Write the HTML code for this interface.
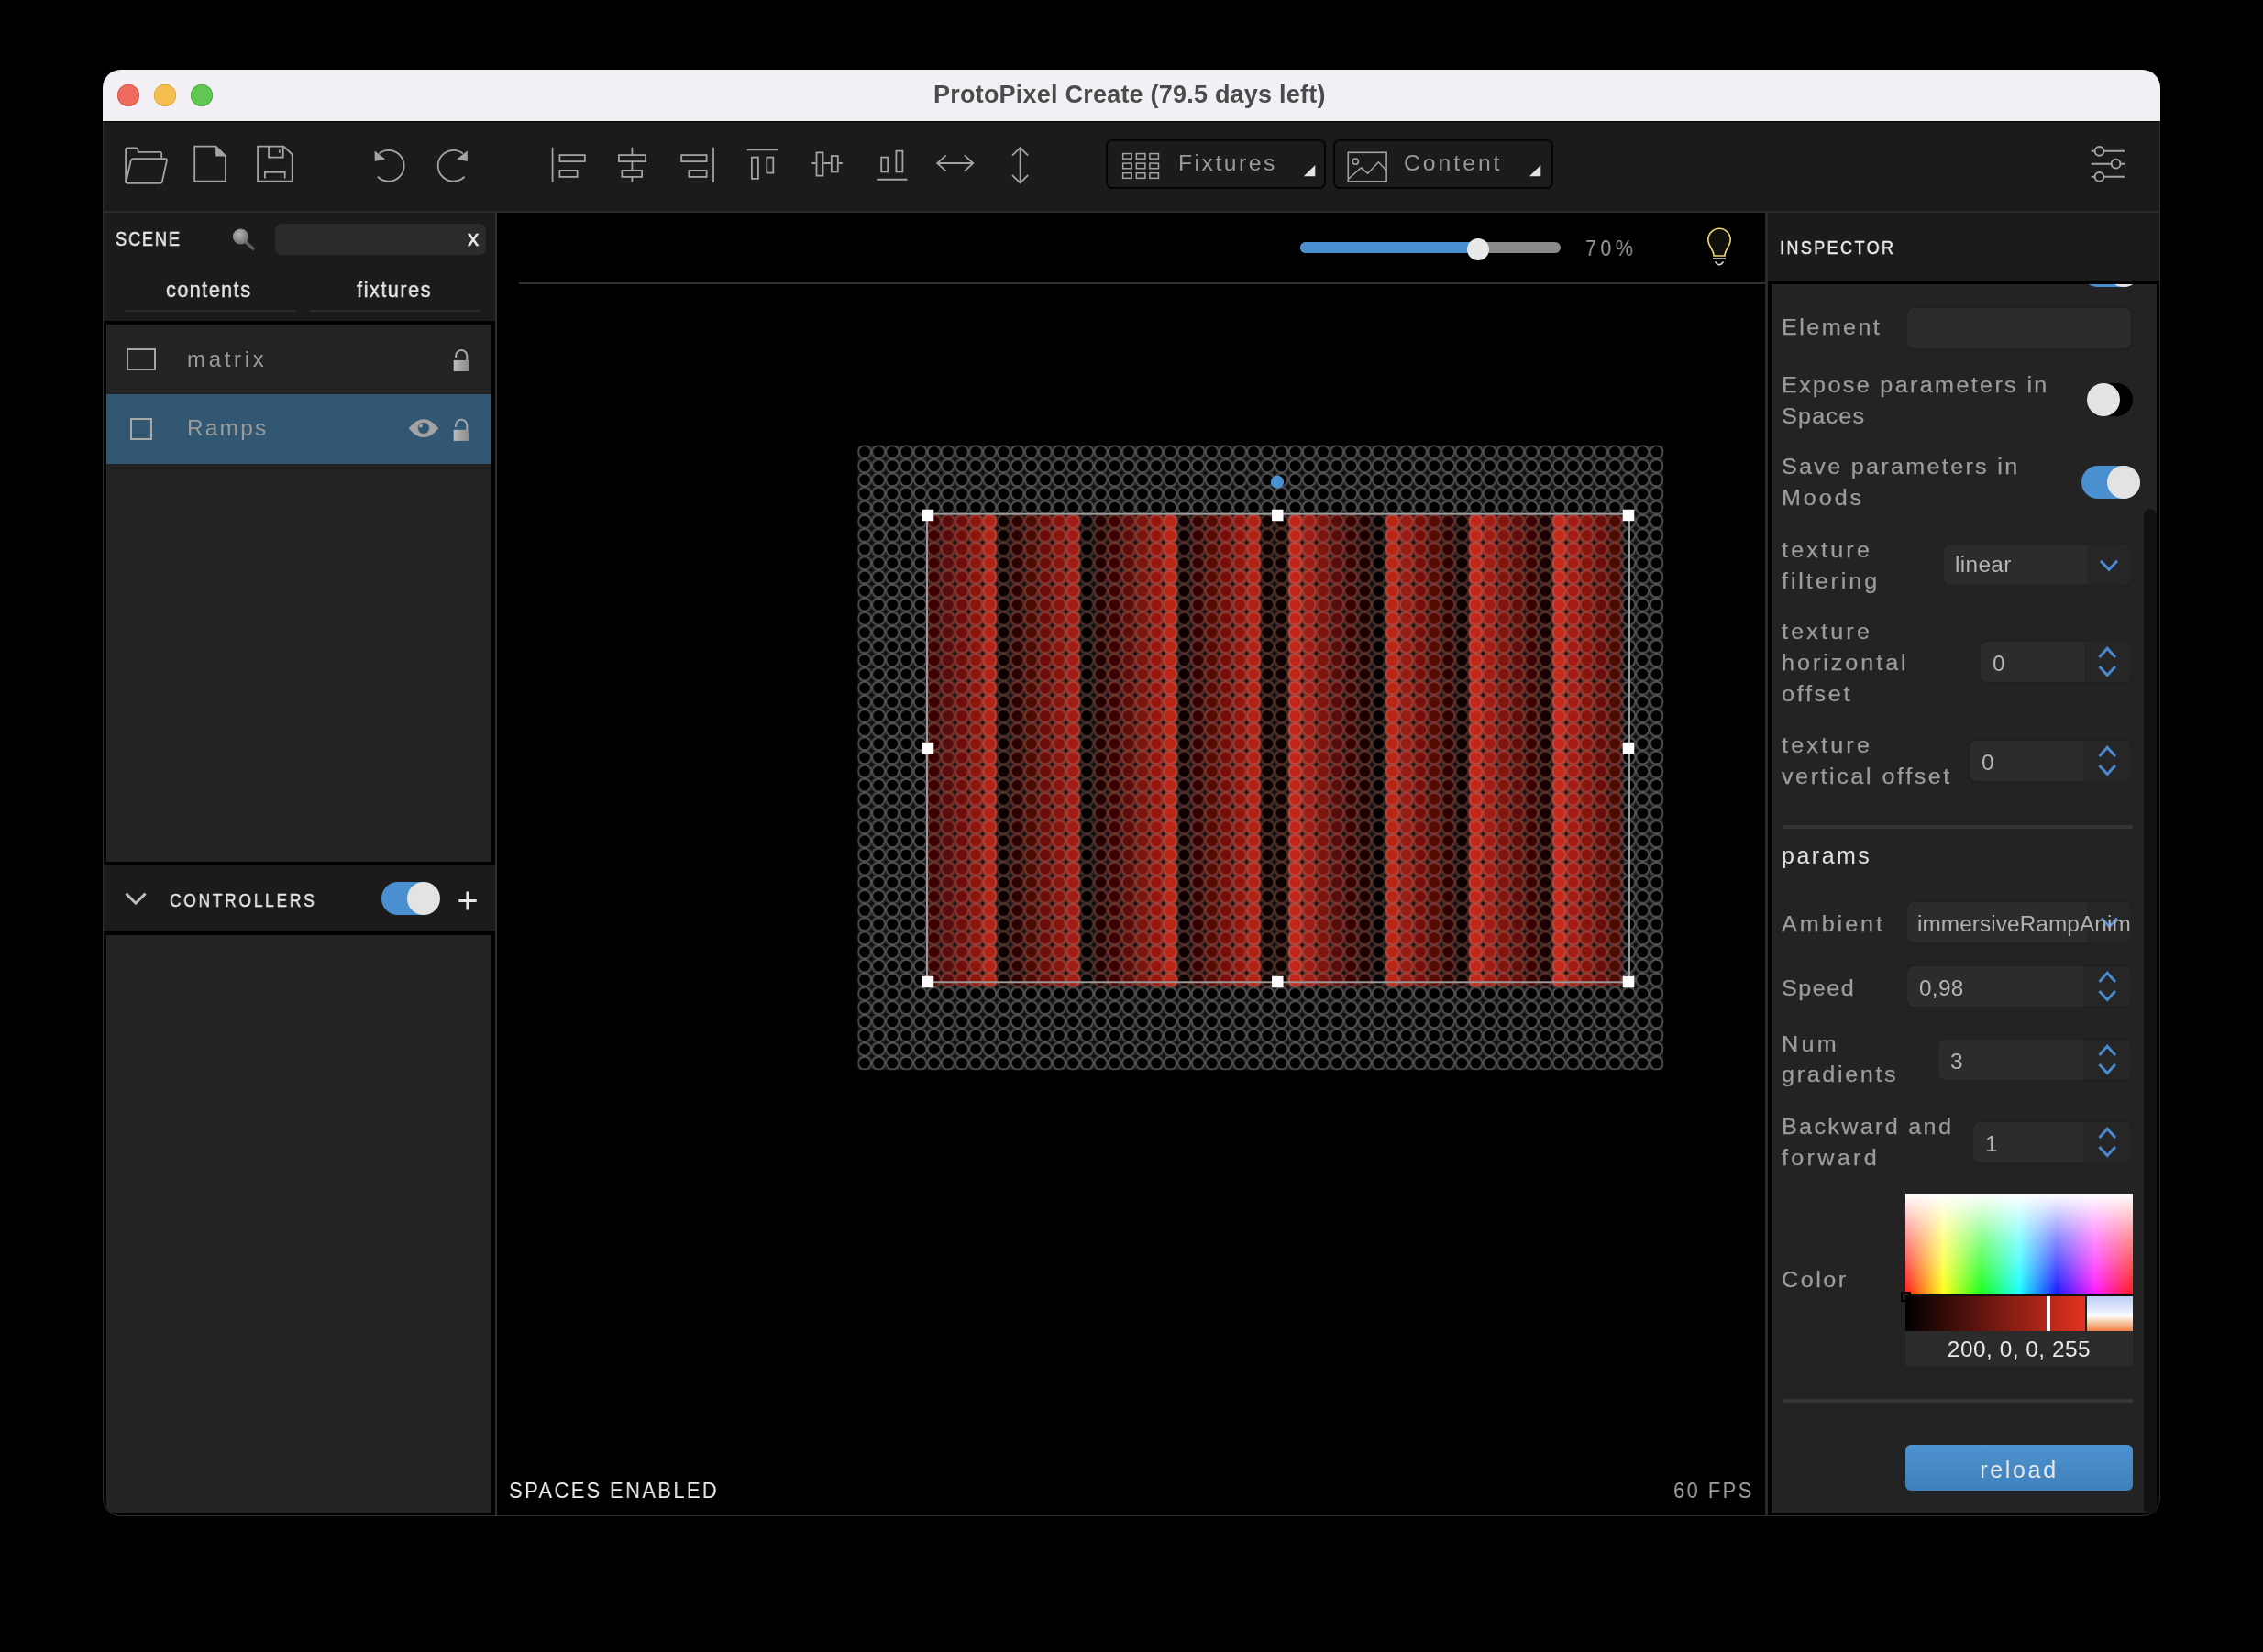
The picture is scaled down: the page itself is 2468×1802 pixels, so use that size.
<!DOCTYPE html><html><head><meta charset="utf-8"><style>html,body{margin:0;padding:0;background:#000;width:2468px;height:1802px;overflow:hidden}.r{position:absolute}.t{position:absolute;white-space:pre;font-family:"Liberation Sans",sans-serif;-webkit-font-smoothing:antialiased;will-change:transform}</style></head><body>
<div class="r" style="left:112px;top:76px;width:2244px;height:1578px;background:#000;border-radius:20px;box-shadow:inset 0 0 0 1px #2e2e2e"></div>
<div class="r" style="left:112px;top:76px;width:2244px;height:56px;background:#f2f0f5;border-radius:20px 20px 0 0"></div>
<div class="r" style="left:128.2px;top:92.2px;width:23.8px;height:23.8px;border-radius:50%;background:#ee6a5f;box-shadow:inset 0 0 0 0.8px #d5544a"></div>
<div class="r" style="left:168.2px;top:92.2px;width:23.8px;height:23.8px;border-radius:50%;background:#f5be4f;box-shadow:inset 0 0 0 0.8px #d9a03a"></div>
<div class="r" style="left:208.1px;top:92.2px;width:23.8px;height:23.8px;border-radius:50%;background:#62c655;box-shadow:inset 0 0 0 0.8px #4da43f"></div>
<div class="t" style="left:1017.5px;top:89.6px;font-size:27px;line-height:27px;color:#4b4b4b;font-weight:700;letter-spacing:0.22px;">ProtoPixel Create (79.5 days left)</div>
<div class="r" style="left:113px;top:133px;width:2242px;height:97px;background:#1b1b1b;"></div>
<div class="r" style="left:113px;top:230px;width:2242px;height:2px;background:#2c2c2c;"></div>
<div class="r" style="left:1206px;top:152px;width:240px;height:53.5px;background:#1b1b1b;border:2px solid #050505;border-radius:7px;box-sizing:border-box"></div>
<div class="r" style="left:1454px;top:152px;width:240px;height:53.5px;background:#1b1b1b;border:2px solid #050505;border-radius:7px;box-sizing:border-box"></div>
<div class="t" style="left:1285.0px;top:165.7px;font-size:24.7px;line-height:24.7px;color:#9a9a9a;letter-spacing:2.5px;">Fixtures</div>
<div class="t" style="left:1531.0px;top:165.7px;font-size:24.7px;line-height:24.7px;color:#9a9a9a;letter-spacing:3.0px;">Content</div>
<div class="r" style="left:540px;top:232px;width:2px;height:1422px;background:#2e2e2e;"></div>
<div class="r" style="left:113px;top:232px;width:427px;height:118px;background:#1b1b1b;"></div>
<div class="t" style="left:126.0px;top:250.9px;font-size:21.4px;line-height:21.4px;color:#e8e8e8;letter-spacing:1.95px;transform:scaleX(0.86);transform-origin:0 0;-webkit-text-stroke:0.45px #e8e8e8">SCENE</div>
<div class="r" style="left:300px;top:244px;width:230px;height:34px;background:#2b2b2b;border-radius:7px"></div>
<div class="t" style="left:510.4px;top:247.9px;font-size:24.5px;line-height:24.5px;color:#e8e8e8;-webkit-text-stroke:0.5px #e8e8e8">x</div>
<div class="t" style="left:181.0px;top:304.4px;font-size:24px;line-height:24px;color:#e6e6e6;letter-spacing:1.63px;transform:scaleX(0.9);transform-origin:0 0;-webkit-text-stroke:0.45px #e6e6e6">contents</div>
<div class="t" style="left:389.2px;top:304.4px;font-size:24px;line-height:24px;color:#e6e6e6;letter-spacing:1.72px;transform:scaleX(0.9);transform-origin:0 0;-webkit-text-stroke:0.45px #e6e6e6">fixtures</div>
<div class="r" style="left:136px;top:338px;width:186px;height:2px;background:#2c2c2c;"></div>
<div class="r" style="left:338px;top:338px;width:186px;height:2px;background:#2c2c2c;"></div>
<div class="r" style="left:116px;top:354px;width:420px;height:585.5px;background:#232323;"></div>
<div class="r" style="left:116px;top:430px;width:420px;height:75.69999999999999px;background:#315773;"></div>
<div class="r" style="left:138px;top:380px;width:32px;height:24px;background:transparent;border:2.3px solid #a8a8a8;box-sizing:border-box"></div>
<div class="r" style="left:142px;top:456px;width:24px;height:24px;background:transparent;border:2.3px solid #a8a8a8;box-sizing:border-box"></div>
<div class="t" style="left:204.0px;top:380.2px;font-size:24px;line-height:24px;color:#9a9a9a;letter-spacing:3.7px;">matrix</div>
<div class="t" style="left:203.5px;top:455.4px;font-size:24.5px;line-height:24.5px;color:#9a9a9a;letter-spacing:2.15px;">Ramps</div>
<div class="r" style="left:113px;top:944px;width:427px;height:71.29999999999995px;background:#1b1b1b;"></div>
<div class="t" style="left:185.4px;top:971.5px;font-size:20.1px;line-height:20.1px;color:#e6e6e6;letter-spacing:3.26px;transform:scaleX(0.86);transform-origin:0 0;-webkit-text-stroke:0.45px #e6e6e6">CONTROLLERS</div>
<div class="r" style="left:116px;top:1020px;width:420px;height:630px;background:#232323;border-bottom-left-radius:8px"></div>
<div class="r" style="left:415.8px;top:961.8px;width:61.599999999999966px;height:36.0px;background:#4a8fd0;border-radius:18px"></div>
<div class="r" style="left:444px;top:962px;width:36px;height:36px;border-radius:50%;background:#e3e3e3"></div>
<div class="r" style="left:1418.3px;top:264.1px;width:283.79999999999995px;height:11.699999999999989px;background:#8a8a8a;border-radius:6px"></div>
<div class="r" style="left:1418.3px;top:264.1px;width:195.70000000000005px;height:11.699999999999989px;background:#4a90d0;border-radius:6px 0 0 6px"></div>
<div class="r" style="left:1600px;top:260px;width:24px;height:24px;border-radius:50%;background:#e8e8e8"></div>
<div class="t" style="left:1728.8px;top:260.1px;font-size:23.7px;line-height:23.7px;color:#9a9a9a;letter-spacing:5.13px;transform:scaleX(0.9);transform-origin:0 0;">70%</div>
<div class="r" style="left:566px;top:308px;width:1359px;height:2px;background:#2e2e2e;"></div>
<svg class="r" style="left:0;top:0" width="2468" height="1802" viewBox="0 0 2468 1802"><defs><pattern id="ring" patternUnits="userSpaceOnUse" x="935.4" y="485.5" width="15.15" height="15.15"><circle cx="7.575" cy="7.575" r="6.75" fill="none" stroke="rgba(255,255,255,0.31)" stroke-width="1.6"/></pattern><pattern id="ringr" patternUnits="userSpaceOnUse" x="935.4" y="485.5" width="15.15" height="15.15"><circle cx="7.575" cy="7.575" r="6.75" fill="none" stroke="rgba(255,140,120,0.28)" stroke-width="1.6"/></pattern><pattern id="blk" patternUnits="userSpaceOnUse" x="935.4" y="485.5" width="15.15" height="15.15"><circle cx="7.575" cy="7.575" r="7.1" fill="#000"/></pattern><pattern id="dots" patternUnits="userSpaceOnUse" x="942.975" y="493.075" width="15.15" height="15.15"><circle cx="7.575" cy="7.575" r="1.8" fill="rgba(0,0,0,0.75)"/></pattern><mask id="gapm" maskUnits="userSpaceOnUse" x="935.4" y="485.5" width="878.70" height="681.75"><rect x="935.4" y="485.5" width="878.70" height="681.75" fill="#fff"/><rect x="935.4" y="485.5" width="878.70" height="681.75" fill="url(#blk)"/></mask><filter id="soft" x="0" y="0" width="1" height="1"><feGaussianBlur stdDeviation="0.5"/></filter></defs><g filter="url(#soft)"><rect x="935.4" y="485.5" width="878.70" height="681.75" fill="#000"/><rect x="1011.15" y="561.25" width="15.35" height="515.10" fill="rgb(58,5,3)"/><rect x="1026.30" y="561.25" width="15.35" height="515.10" fill="rgb(85,10,7)"/><rect x="1041.45" y="561.25" width="15.35" height="515.10" fill="rgb(110,15,10)"/><rect x="1056.60" y="561.25" width="15.35" height="515.10" fill="rgb(138,22,15)"/><rect x="1071.75" y="561.25" width="15.35" height="515.10" fill="rgb(176,34,23)"/><rect x="1086.90" y="561.25" width="15.35" height="515.10" fill="rgb(10,0,0)"/><rect x="1102.05" y="561.25" width="15.35" height="515.10" fill="rgb(42,3,2)"/><rect x="1117.20" y="561.25" width="15.35" height="515.10" fill="rgb(74,8,5)"/><rect x="1132.35" y="561.25" width="15.35" height="515.10" fill="rgb(106,14,10)"/><rect x="1147.50" y="561.25" width="15.35" height="515.10" fill="rgb(133,21,14)"/><rect x="1162.65" y="561.25" width="15.35" height="515.10" fill="rgb(160,29,20)"/><rect x="1177.80" y="561.25" width="15.35" height="515.10" fill="rgb(0,0,0)"/><rect x="1192.95" y="561.25" width="15.35" height="515.10" fill="rgb(32,2,1)"/><rect x="1208.10" y="561.25" width="15.35" height="515.10" fill="rgb(58,5,3)"/><rect x="1223.25" y="561.25" width="15.35" height="515.10" fill="rgb(90,11,7)"/><rect x="1238.40" y="561.25" width="15.35" height="515.10" fill="rgb(122,18,12)"/><rect x="1253.55" y="561.25" width="15.35" height="515.10" fill="rgb(149,25,17)"/><rect x="1268.70" y="561.25" width="15.35" height="515.10" fill="rgb(184,37,25)"/><rect x="1283.85" y="561.25" width="15.35" height="515.10" fill="rgb(14,0,0)"/><rect x="1299.00" y="561.25" width="15.35" height="515.10" fill="rgb(51,4,3)"/><rect x="1314.15" y="561.25" width="15.35" height="515.10" fill="rgb(82,9,6)"/><rect x="1329.30" y="561.25" width="15.35" height="515.10" fill="rgb(117,17,11)"/><rect x="1344.45" y="561.25" width="15.35" height="515.10" fill="rgb(144,24,16)"/><rect x="1359.60" y="561.25" width="15.35" height="515.10" fill="rgb(176,34,23)"/><rect x="1374.75" y="561.25" width="15.35" height="515.10" fill="rgb(8,0,0)"/><rect x="1389.90" y="561.25" width="15.35" height="515.10" fill="rgb(16,1,0)"/><rect x="1405.05" y="561.25" width="15.35" height="515.10" fill="rgb(192,40,27)"/><rect x="1420.20" y="561.25" width="15.35" height="515.10" fill="rgb(156,28,19)"/><rect x="1435.35" y="561.25" width="15.35" height="515.10" fill="rgb(122,18,12)"/><rect x="1450.50" y="561.25" width="15.35" height="515.10" fill="rgb(86,10,7)"/><rect x="1465.65" y="561.25" width="15.35" height="515.10" fill="rgb(56,5,3)"/><rect x="1480.80" y="561.25" width="15.35" height="515.10" fill="rgb(28,2,1)"/><rect x="1495.95" y="561.25" width="15.35" height="515.10" fill="rgb(0,0,0)"/><rect x="1511.10" y="561.25" width="15.35" height="515.10" fill="rgb(184,37,25)"/><rect x="1526.25" y="561.25" width="15.35" height="515.10" fill="rgb(150,26,18)"/><rect x="1541.40" y="561.25" width="15.35" height="515.10" fill="rgb(116,17,11)"/><rect x="1556.55" y="561.25" width="15.35" height="515.10" fill="rgb(82,9,6)"/><rect x="1571.70" y="561.25" width="15.35" height="515.10" fill="rgb(46,4,2)"/><rect x="1586.85" y="561.25" width="15.35" height="515.10" fill="rgb(12,0,0)"/><rect x="1602.00" y="561.25" width="15.35" height="515.10" fill="rgb(192,40,27)"/><rect x="1617.15" y="561.25" width="15.35" height="515.10" fill="rgb(160,29,20)"/><rect x="1632.30" y="561.25" width="15.35" height="515.10" fill="rgb(126,19,13)"/><rect x="1647.45" y="561.25" width="15.35" height="515.10" fill="rgb(94,12,8)"/><rect x="1662.60" y="561.25" width="15.35" height="515.10" fill="rgb(58,5,3)"/><rect x="1677.75" y="561.25" width="15.35" height="515.10" fill="rgb(24,1,1)"/><rect x="1692.90" y="561.25" width="15.35" height="515.10" fill="rgb(196,41,28)"/><rect x="1708.05" y="561.25" width="15.35" height="515.10" fill="rgb(164,30,21)"/><rect x="1723.20" y="561.25" width="15.35" height="515.10" fill="rgb(134,21,14)"/><rect x="1738.35" y="561.25" width="15.35" height="515.10" fill="rgb(104,14,9)"/><rect x="1753.50" y="561.25" width="15.35" height="515.10" fill="rgb(74,8,5)"/><g mask="url(#gapm)"><rect x="1011.15" y="561.25" width="757.50" height="515.10" fill="rgba(0,0,0,0.38)"/><rect x="935.4" y="485.5" width="878.70" height="681.75" fill="rgba(255,255,255,0.14)"/></g><rect x="935.4" y="485.5" width="878.70" height="681.75" fill="url(#dots)"/><rect x="935.40" y="485.50" width="878.70" height="75.75" fill="url(#ring)"/><rect x="935.40" y="1076.35" width="878.70" height="90.90" fill="url(#ring)"/><rect x="935.40" y="561.25" width="75.75" height="515.10" fill="url(#ring)"/><rect x="1768.65" y="561.25" width="45.45" height="515.10" fill="url(#ring)"/><rect x="1011.15" y="561.25" width="757.50" height="515.10" fill="url(#ringr)"/></g><rect x="1011" y="560.7" width="766" height="510.6" fill="none" stroke="#9a9a9a" stroke-width="2"/><rect x="1005.75" y="555.75" width="12.5" height="12.5" fill="#fff"/><rect x="1387.05" y="555.75" width="12.5" height="12.5" fill="#fff"/><rect x="1769.75" y="555.75" width="12.5" height="12.5" fill="#fff"/><rect x="1005.75" y="809.75" width="12.5" height="12.5" fill="#fff"/><rect x="1769.75" y="809.75" width="12.5" height="12.5" fill="#fff"/><rect x="1005.75" y="1064.75" width="12.5" height="12.5" fill="#fff"/><rect x="1387.05" y="1064.75" width="12.5" height="12.5" fill="#fff"/><rect x="1769.75" y="1064.75" width="12.5" height="12.5" fill="#fff"/><circle cx="1393" cy="525.7" r="7.1" fill="#4a90d0"/></svg>
<div class="t" style="left:554.8px;top:1613.5px;font-size:24.4px;line-height:24.4px;color:#f0f0f0;letter-spacing:2.63px;transform:scaleX(0.9);transform-origin:0 0;">SPACES ENABLED</div>
<div class="t" style="left:1824.6px;top:1613.5px;font-size:24.4px;line-height:24.4px;color:#a0a0a0;letter-spacing:2.68px;transform:scaleX(0.9);transform-origin:0 0;">60 FPS</div>
<div class="r" style="left:1925px;top:232px;width:3px;height:1422px;background:#2a2a2a;"></div>
<div class="r" style="left:1928px;top:232px;width:427px;height:74px;background:#1b1b1b;"></div>
<div class="t" style="left:1941.2px;top:259.2px;font-size:21px;line-height:21px;color:#eeeeee;letter-spacing:2.76px;transform:scaleX(0.86);transform-origin:0 0;-webkit-text-stroke:0.45px #eeeeee">INSPECTOR</div>
<div class="r" style="left:1932px;top:310px;width:420px;height:1340px;background:#232323;"></div>
<div class="r" style="left:2260px;top:310px;width:80px;height:3px;overflow:hidden"><div class="r" style="left:10px;top:-33.5px;width:63.5px;height:36.4px;border-radius:18px;background:#4a8fd0"></div><div class="r" style="left:37.6px;top:-33.5px;width:36.4px;height:36.4px;border-radius:50%;background:#e3e3e3"></div></div>
<div class="t" style="left:1942.8px;top:346.4px;font-size:23.5px;line-height:23.5px;color:#9c9c9c;letter-spacing:2.27px;transform:scaleX(1.07);transform-origin:0 0;-webkit-text-stroke:0.25px #9c9c9c">Element</div>
<div class="r" style="left:2080px;top:336px;width:244px;height:44px;background:#2c2c2c;border-radius:7px;box-shadow:0 0 0 1px #1f1f1f"></div>
<div class="t" style="left:1942.8px;top:408.7px;font-size:23.5px;line-height:23.5px;color:#9c9c9c;letter-spacing:2.20px;transform:scaleX(1.07);transform-origin:0 0;-webkit-text-stroke:0.25px #9c9c9c">Expose parameters in</div>
<div class="t" style="left:1942.8px;top:442.7px;font-size:23.5px;line-height:23.5px;color:#9c9c9c;letter-spacing:1.18px;transform:scaleX(1.07);transform-origin:0 0;-webkit-text-stroke:0.25px #9c9c9c">Spaces</div>
<div class="r" style="left:2276px;top:417.5px;width:50px;height:36.0px;background:#000;border-radius:18px"></div>
<div class="r" style="left:2275.8px;top:417.5px;width:36.4px;height:36.4px;border-radius:50%;background:#e3e3e3"></div>
<div class="t" style="left:1942.8px;top:498.2px;font-size:23.5px;line-height:23.5px;color:#9c9c9c;letter-spacing:2.15px;transform:scaleX(1.07);transform-origin:0 0;-webkit-text-stroke:0.25px #9c9c9c">Save parameters in</div>
<div class="t" style="left:1942.8px;top:532.2px;font-size:23.5px;line-height:23.5px;color:#9c9c9c;letter-spacing:2.73px;transform:scaleX(1.07);transform-origin:0 0;-webkit-text-stroke:0.25px #9c9c9c">Moods</div>
<div class="r" style="left:2270px;top:507.8px;width:63.5px;height:36.400000000000034px;background:#4a8fd0;border-radius:18px"></div>
<div class="r" style="left:2297.6px;top:507.8px;width:36.4px;height:36.4px;border-radius:50%;background:#e3e3e3"></div>
<div class="r" style="left:2338px;top:555px;width:14px;height:1095px;background:#121212;border-radius:7px 7px 0 6px"></div>
<div class="t" style="left:1942.8px;top:588.6px;font-size:23.5px;line-height:23.5px;color:#9c9c9c;letter-spacing:2.96px;transform:scaleX(1.07);transform-origin:0 0;-webkit-text-stroke:0.25px #9c9c9c">texture</div>
<div class="t" style="left:1942.8px;top:622.7px;font-size:23.5px;line-height:23.5px;color:#9c9c9c;letter-spacing:2.70px;transform:scaleX(1.07);transform-origin:0 0;-webkit-text-stroke:0.25px #9c9c9c">filtering</div>
<div class="r" style="left:2120px;top:594px;width:204px;height:44px;background:#2c2c2c;border-radius:7px;box-shadow:0 0 0 1px #1f1f1f"></div>
<div class="r" style="left:2276px;top:594px;width:48px;height:44px;background:#262626;border-radius:0 7px 7px 0"></div>
<div class="t" style="left:2132.0px;top:603.5px;font-size:24.4px;line-height:24.4px;color:#b4b4b4;letter-spacing:0.35px;">linear</div>
<div class="t" style="left:1942.8px;top:678.1px;font-size:23.5px;line-height:23.5px;color:#9c9c9c;letter-spacing:2.96px;transform:scaleX(1.07);transform-origin:0 0;-webkit-text-stroke:0.25px #9c9c9c">texture</div>
<div class="t" style="left:1942.8px;top:712.1px;font-size:23.5px;line-height:23.5px;color:#9c9c9c;letter-spacing:2.77px;transform:scaleX(1.07);transform-origin:0 0;-webkit-text-stroke:0.25px #9c9c9c">horizontal</div>
<div class="t" style="left:1942.8px;top:745.6px;font-size:23.5px;line-height:23.5px;color:#9c9c9c;letter-spacing:2.52px;transform:scaleX(1.07);transform-origin:0 0;-webkit-text-stroke:0.25px #9c9c9c">offset</div>
<div class="r" style="left:2160px;top:700px;width:164px;height:44px;background:#2c2c2c;border-radius:7px;box-shadow:0 0 0 1px #1f1f1f"></div>
<div class="r" style="left:2273px;top:700px;width:51px;height:44px;background:#262626;border-radius:0 7px 7px 0"></div>
<div class="t" style="left:2172.5px;top:711.8px;font-size:24.4px;line-height:24.4px;color:#b4b4b4;letter-spacing:0.3px;">0</div>
<div class="t" style="left:1942.8px;top:802.0px;font-size:23.5px;line-height:23.5px;color:#9c9c9c;letter-spacing:2.96px;transform:scaleX(1.07);transform-origin:0 0;-webkit-text-stroke:0.25px #9c9c9c">texture</div>
<div class="t" style="left:1942.8px;top:836.0px;font-size:23.5px;line-height:23.5px;color:#9c9c9c;letter-spacing:2.38px;transform:scaleX(1.07);transform-origin:0 0;-webkit-text-stroke:0.25px #9c9c9c">vertical offset</div>
<div class="r" style="left:2148px;top:808px;width:176px;height:44px;background:#2c2c2c;border-radius:7px;box-shadow:0 0 0 1px #1f1f1f"></div>
<div class="r" style="left:2272px;top:808px;width:52px;height:44px;background:#262626;border-radius:0 7px 7px 0"></div>
<div class="t" style="left:2160.5px;top:819.8px;font-size:24.4px;line-height:24.4px;color:#b4b4b4;letter-spacing:0.3px;">0</div>
<div class="r" style="left:1944px;top:900px;width:382px;height:3.5px;background:#353535;"></div>
<div class="t" style="left:1942.5px;top:921.2px;font-size:25px;line-height:25px;color:#e0e0e0;letter-spacing:2.5px;">params</div>
<div class="t" style="left:1942.8px;top:996.6px;font-size:23.5px;line-height:23.5px;color:#9c9c9c;letter-spacing:2.77px;transform:scaleX(1.07);transform-origin:0 0;-webkit-text-stroke:0.25px #9c9c9c">Ambient</div>
<div class="r" style="left:2080px;top:984px;width:244px;height:44px;background:#2c2c2c;border-radius:7px;box-shadow:0 0 0 1px #1f1f1f"></div>
<div class="r" style="left:2276px;top:984px;width:48px;height:44px;background:#262626;border-radius:0 7px 7px 0"></div>
<svg class="r" style="left:2280px;top:995px" width="40" height="24"><path fill="none" stroke="#4a8ad0" stroke-width="3" d="M11.9 6.6L20.5 15.8L29 6.6"/></svg>
<div class="r" style="left:2080px;top:984px;width:244px;height:44px;overflow:hidden">
<div class="t" style="left:10.6px;top:11.8px;font-size:24.4px;line-height:24.4px;color:#b0b0b0;letter-spacing:0.06px;">immersiveRampAnim</div>
</div>
<div class="t" style="left:1942.8px;top:1066.6px;font-size:23.5px;line-height:23.5px;color:#9c9c9c;letter-spacing:1.43px;transform:scaleX(1.07);transform-origin:0 0;-webkit-text-stroke:0.25px #9c9c9c">Speed</div>
<div class="r" style="left:2080px;top:1054px;width:244px;height:44px;background:#2c2c2c;border-radius:7px;box-shadow:0 0 0 1px #1f1f1f"></div>
<div class="r" style="left:2272px;top:1054px;width:52px;height:44px;background:#262626;border-radius:0 7px 7px 0"></div>
<div class="t" style="left:2092.5px;top:1065.8px;font-size:24.4px;line-height:24.4px;color:#b4b4b4;letter-spacing:0.3px;">0,98</div>
<div class="t" style="left:1942.8px;top:1128.2px;font-size:23.5px;line-height:23.5px;color:#9c9c9c;letter-spacing:3.14px;transform:scaleX(1.07);transform-origin:0 0;-webkit-text-stroke:0.25px #9c9c9c">Num</div>
<div class="t" style="left:1942.8px;top:1161.3px;font-size:23.5px;line-height:23.5px;color:#9c9c9c;letter-spacing:2.47px;transform:scaleX(1.07);transform-origin:0 0;-webkit-text-stroke:0.25px #9c9c9c">gradients</div>
<div class="r" style="left:2114px;top:1134px;width:210px;height:44px;background:#2c2c2c;border-radius:7px;box-shadow:0 0 0 1px #1f1f1f"></div>
<div class="r" style="left:2272px;top:1134px;width:52px;height:44px;background:#262626;border-radius:0 7px 7px 0"></div>
<div class="t" style="left:2126.5px;top:1145.8px;font-size:24.4px;line-height:24.4px;color:#b4b4b4;letter-spacing:0.3px;">3</div>
<div class="t" style="left:1942.8px;top:1218.3px;font-size:23.5px;line-height:23.5px;color:#9c9c9c;letter-spacing:2.17px;transform:scaleX(1.07);transform-origin:0 0;-webkit-text-stroke:0.25px #9c9c9c">Backward and</div>
<div class="t" style="left:1942.8px;top:1251.7px;font-size:23.5px;line-height:23.5px;color:#9c9c9c;letter-spacing:3.10px;transform:scaleX(1.07);transform-origin:0 0;-webkit-text-stroke:0.25px #9c9c9c">forward</div>
<div class="r" style="left:2152px;top:1224px;width:172px;height:44px;background:#2c2c2c;border-radius:7px;box-shadow:0 0 0 1px #1f1f1f"></div>
<div class="r" style="left:2272px;top:1224px;width:52px;height:44px;background:#262626;border-radius:0 7px 7px 0"></div>
<div class="t" style="left:2164.5px;top:1235.8px;font-size:24.4px;line-height:24.4px;color:#b4b4b4;letter-spacing:0.3px;">1</div>
<div class="t" style="left:1942.8px;top:1384.7px;font-size:23.5px;line-height:23.5px;color:#9c9c9c;letter-spacing:2.33px;transform:scaleX(1.07);transform-origin:0 0;-webkit-text-stroke:0.25px #9c9c9c">Color</div>
<div class="r" style="left:2078px;top:1302px;width:248px;height:110px;background:linear-gradient(to bottom,#fff 0%,rgba(255,255,255,0.55) 45%,rgba(255,255,255,0.1) 100%),linear-gradient(to right,#f00,#ff0 16.67%,#0f0 33.33%,#0ff 50%,#00f 66.67%,#f0f 83.33%,#f00)"></div>
<div class="r" style="left:2078px;top:1412px;width:248px;height:2px;background:#111;"></div>
<div class="r" style="left:2078px;top:1414px;width:196px;height:38px;background:linear-gradient(to right,#000 0%,#8a1e14 60%,#e3321f 100%)"></div>
<div class="r" style="left:2232px;top:1414px;width:4.199999999999818px;height:38px;background:#ffffff;"></div>
<div class="r" style="left:2274.3px;top:1414px;width:1.699999999999818px;height:38px;background:#222;"></div>
<div class="r" style="left:2276px;top:1414px;width:50px;height:38px;background:linear-gradient(to bottom,#bccdf5 0%,#e8eefc 45%,#fff 55%,#f5c8a0 75%,#ee8044 100%)"></div>
<div class="r" style="left:2073px;top:1409px;width:10.5px;height:10.5px;border:2px solid #000;box-sizing:border-box"></div>
<div class="r" style="left:2078px;top:1452px;width:248px;height:37.5px;background:#2b2b2b;"></div>
<div class="t" style="left:1902.0px;width:600px;text-align:center;top:1460.2px;font-size:24.4px;line-height:24.4px;color:#e8e8e8;letter-spacing:0.51px;">200, 0, 0, 255</div>
<div class="r" style="left:1944px;top:1526px;width:382px;height:3.5px;background:#353535;"></div>
<div class="r" style="left:2078px;top:1576px;width:248px;height:50px;background:linear-gradient(to bottom,#4d93d0,#3f80ba);border-radius:6px"></div>
<div class="t" style="left:1902.0px;width:600px;text-align:center;top:1591.0px;font-size:25px;line-height:25px;color:#e8e8e8;letter-spacing:2.66px;">reload</div>
<svg class="r" style="left:0;top:0" width="2468" height="1802" viewBox="0 0 2468 1802"><defs><radialGradient id="mag" cx="0.4" cy="0.35" r="0.7"><stop offset="0" stop-color="#b5b5b5"/><stop offset="1" stop-color="#6a6a6a"/></radialGradient><linearGradient id="lockg" x1="0" x2="1"><stop offset="0" stop-color="#bdbdbd"/><stop offset="0.5" stop-color="#a0a0a0"/><stop offset="1" stop-color="#8a8a8a"/></linearGradient></defs><path fill="none" stroke="#a3a3a3" stroke-width="1.8" stroke-linejoin="round" d="M137.1 199.5V163.4Q137.1 161.5 139 161.5H148.7Q150.5 161.5 150.5 163.3V165.9H174.4Q176.2 165.9 176.2 167.7V172.6"/><path fill="none" stroke="#a3a3a3" stroke-width="1.8" stroke-linejoin="round" d="M142.7 175.2Q143.2 173.2 145.2 173.2H180.4Q182.3 173.2 181.9 175.1L176.9 198Q176.5 199.9 174.6 199.9H139.2Q137.2 199.9 137.6 198Z"/><path fill="none" stroke="#a3a3a3" stroke-width="1.8" d="M212.2 159.7H235.6L246 170.1V197.7H212.2Z"/><path fill="#a3a3a3" d="M235.2 159.2L246.5 170.6H235.2Z"/><path fill="none" stroke="#a3a3a3" stroke-width="1.8" d="M281.1 159.7H309.4L318.7 168.5V197.7H281.1Z"/><path fill="none" stroke="#a3a3a3" stroke-width="1.8" d="M293 159.7V171.7H308.8V159.7"/><path fill="none" stroke="#a3a3a3" stroke-width="1.8" d="M304.8 163.3V166.8"/><path fill="none" stroke="#a3a3a3" stroke-width="1.8" d="M288.9 194.4V187.8H310.7V194.4"/><path fill="none" stroke="#a3a3a3" stroke-width="1.8" d="M411.85 192.75A16.9 16.9 0 1 0 413.4 167.5"/><path fill="#a3a3a3" d="M408.6 164.6L408.6 176L420.2 173.6Z"/><path fill="none" stroke="#a3a3a3" stroke-width="1.8" d="M506.55 192.75A16.9 16.9 0 1 1 505 167.5"/><path fill="#a3a3a3" d="M509.8 164.6L509.8 176L498.2 173.6Z"/><path fill="none" stroke="#a3a3a3" stroke-width="1.8" d="M602.6 160.75V198.75"/><rect fill="none" stroke="#a3a3a3" stroke-width="1.8" x="610.4" y="169.1" width="27.4" height="7" /><rect fill="none" stroke="#a3a3a3" stroke-width="1.8" x="610.4" y="185.9" width="19.2" height="7" /><path fill="none" stroke="#a3a3a3" stroke-width="1.8" d="M689.4 160.75V169.1M689.4 176.1V185.9M689.4 192.9V198.75"/><rect fill="none" stroke="#a3a3a3" stroke-width="1.8" x="674.9" y="169.1" width="29.2" height="7" /><rect fill="none" stroke="#a3a3a3" stroke-width="1.8" x="678.3" y="185.9" width="21.8" height="7" /><path fill="none" stroke="#a3a3a3" stroke-width="1.8" d="M778 160.75V198.75"/><rect fill="none" stroke="#a3a3a3" stroke-width="1.8" x="743.2" y="169.1" width="27.4" height="7" /><rect fill="none" stroke="#a3a3a3" stroke-width="1.8" x="751.4" y="185.9" width="19.2" height="7" /><path fill="none" stroke="#a3a3a3" stroke-width="1.8" d="M814.7 163.3H848"/><rect fill="none" stroke="#a3a3a3" stroke-width="1.8" x="819.9" y="171.6" width="7" height="23.3" /><rect fill="none" stroke="#a3a3a3" stroke-width="1.8" x="836.3" y="171.6" width="7" height="17" /><path fill="none" stroke="#a3a3a3" stroke-width="1.8" d="M885.4 178H889.6M898.4 178H905.9M914.6 178H918.8"/><rect fill="none" stroke="#a3a3a3" stroke-width="1.8" x="890.5" y="166.4" width="7" height="25.2" /><rect fill="none" stroke="#a3a3a3" stroke-width="1.8" x="906.8" y="170.1" width="7" height="17.3" /><path fill="none" stroke="#a3a3a3" stroke-width="1.8" d="M956.3 195.75H989.5"/><rect fill="none" stroke="#a3a3a3" stroke-width="1.8" x="961.2" y="171.6" width="7" height="15.8" /><rect fill="none" stroke="#a3a3a3" stroke-width="1.8" x="977.4" y="164.6" width="7" height="22.8" /><path fill="none" stroke="#a3a3a3" stroke-width="1.8" d="M1021.8 178H1061.7M1031.6 169.4L1022.2 178L1031.6 186.6M1051.9 169.4L1061.3 178L1051.9 186.6"/><path fill="none" stroke="#a3a3a3" stroke-width="1.8" d="M1112.6 161V199.6M1104 169.6L1112.6 161L1121.2 169.6M1104 191L1112.6 199.6L1121.2 191"/><rect x="1224.65" y="167.55" width="9.5" height="5.6" fill="none" stroke="#a3a3a3" stroke-width="1.5"/><rect x="1224.65" y="178.15" width="9.5" height="5.6" fill="none" stroke="#a3a3a3" stroke-width="1.5"/><rect x="1224.65" y="188.75" width="9.5" height="5.6" fill="none" stroke="#a3a3a3" stroke-width="1.5"/><rect x="1239.35" y="167.55" width="9.5" height="5.6" fill="none" stroke="#a3a3a3" stroke-width="1.5"/><rect x="1239.35" y="178.15" width="9.5" height="5.6" fill="none" stroke="#a3a3a3" stroke-width="1.5"/><rect x="1239.35" y="188.75" width="9.5" height="5.6" fill="none" stroke="#a3a3a3" stroke-width="1.5"/><rect x="1253.95" y="167.55" width="9.5" height="5.6" fill="none" stroke="#a3a3a3" stroke-width="1.5"/><rect x="1253.95" y="178.15" width="9.5" height="5.6" fill="none" stroke="#a3a3a3" stroke-width="1.5"/><rect x="1253.95" y="188.75" width="9.5" height="5.6" fill="none" stroke="#a3a3a3" stroke-width="1.5"/><path fill="#e3e3e3" d="M1421.8 192.3L1434.3 179.9V192.3Z"/><rect x="1470.3" y="166.3" width="41.8" height="31.5" fill="none" stroke="#a3a3a3" stroke-width="1.6"/><circle cx="1478.3" cy="176.1" r="3.1" fill="none" stroke="#a3a3a3" stroke-width="1.6"/><path fill="none" stroke="#a3a3a3" stroke-width="1.6" d="M1470.2 195.5L1484.3 183L1491.7 189.2L1503.3 176.8L1512.6 186.5"/><path fill="#e3e3e3" d="M1668 192.3L1680.3 180V192.3Z"/><path fill="none" stroke="#a3a3a3" stroke-width="2" d="M2280.7 164.8H2317M2280.7 178.7H2317M2280.7 192.8H2317"/><circle cx="2289.5" cy="164.8" r="4.9" fill="#1b1b1b" stroke="#a3a3a3" stroke-width="2"/><circle cx="2307.6" cy="178.7" r="4.9" fill="#1b1b1b" stroke="#a3a3a3" stroke-width="2"/><circle cx="2289.5" cy="192.8" r="4.9" fill="#1b1b1b" stroke="#a3a3a3" stroke-width="2"/><path stroke="#5e5e5e" stroke-width="3.6" stroke-linecap="round" d="M268.5 264.5L275.8 271"/><circle cx="262.5" cy="258" r="8.6" fill="url(#mag)"/><path fill="#a3a3a3" d="M445.7 467.2Q462 447.5 478.2 467.2Q462 487 445.7 467.2Z"/><circle cx="462" cy="467" r="6.4" fill="#315773" stroke="#a3a3a3" stroke-width="0.6"/><circle cx="458.9" cy="464.6" r="1.9" fill="#a3a3a3"/><rect x="494.7" y="392.9" width="17.3" height="12.1" fill="url(#lockg)"/><path fill="none" stroke="#a8a8a8" stroke-width="2" d="M497.1 390V388A6.1 6.1 0 0 1 509.3 388V393"/><rect x="494.7" y="468.79999999999995" width="17.3" height="12.1" fill="url(#lockg)"/><path fill="none" stroke="#a8a8a8" stroke-width="2" d="M497.1 465.9V463.9A6.1 6.1 0 0 1 509.3 463.9V468.9"/><path fill="#12100a" stroke="#f0d870" stroke-width="1.6" d="M1869 279C1869 272 1862.8 268.5 1862.8 261.5A12.2 12.2 0 0 1 1887.2 261.5C1887.2 268.5 1881 272 1881 279Z"/><path fill="none" stroke="#d8d8d8" stroke-width="1.6" d="M1868 282H1882M1870.5 285.5Q1875 292 1879.5 285.5"/><path fill="none" stroke="#bdbdbd" stroke-width="3" d="M137.5 974.6L148 985.2L158.6 974.6"/><path fill="none" stroke="#e8e8e8" stroke-width="3.2" d="M500.3 982.5H519.7M510 972.6V992.4"/><path fill="none" stroke="#4a8ad0" stroke-width="3" d="M2290.9 611.8L2300 621.4L2309 611.8"/><path fill="none" stroke="#4a8ad0" stroke-width="3" d="M2289.5 717.0L2298.2 707.2L2307 717.0M2289.5 727.1L2298.2 736.6L2307 727.1"/><path fill="none" stroke="#4a8ad0" stroke-width="3" d="M2289.5 825.0L2298.2 815.2L2307 825.0M2289.5 835.1L2298.2 844.6L2307 835.1"/><path fill="none" stroke="#4a8ad0" stroke-width="3" d="M2289.5 1071.0L2298.2 1061.2L2307 1071.0M2289.5 1081.1L2298.2 1090.6L2307 1081.1"/><path fill="none" stroke="#4a8ad0" stroke-width="3" d="M2289.5 1151.0L2298.2 1141.2L2307 1151.0M2289.5 1161.1L2298.2 1170.6L2307 1161.1"/><path fill="none" stroke="#4a8ad0" stroke-width="3" d="M2289.5 1241.0L2298.2 1231.2L2307 1241.0M2289.5 1251.1L2298.2 1260.6L2307 1251.1"/></svg>
</body></html>
